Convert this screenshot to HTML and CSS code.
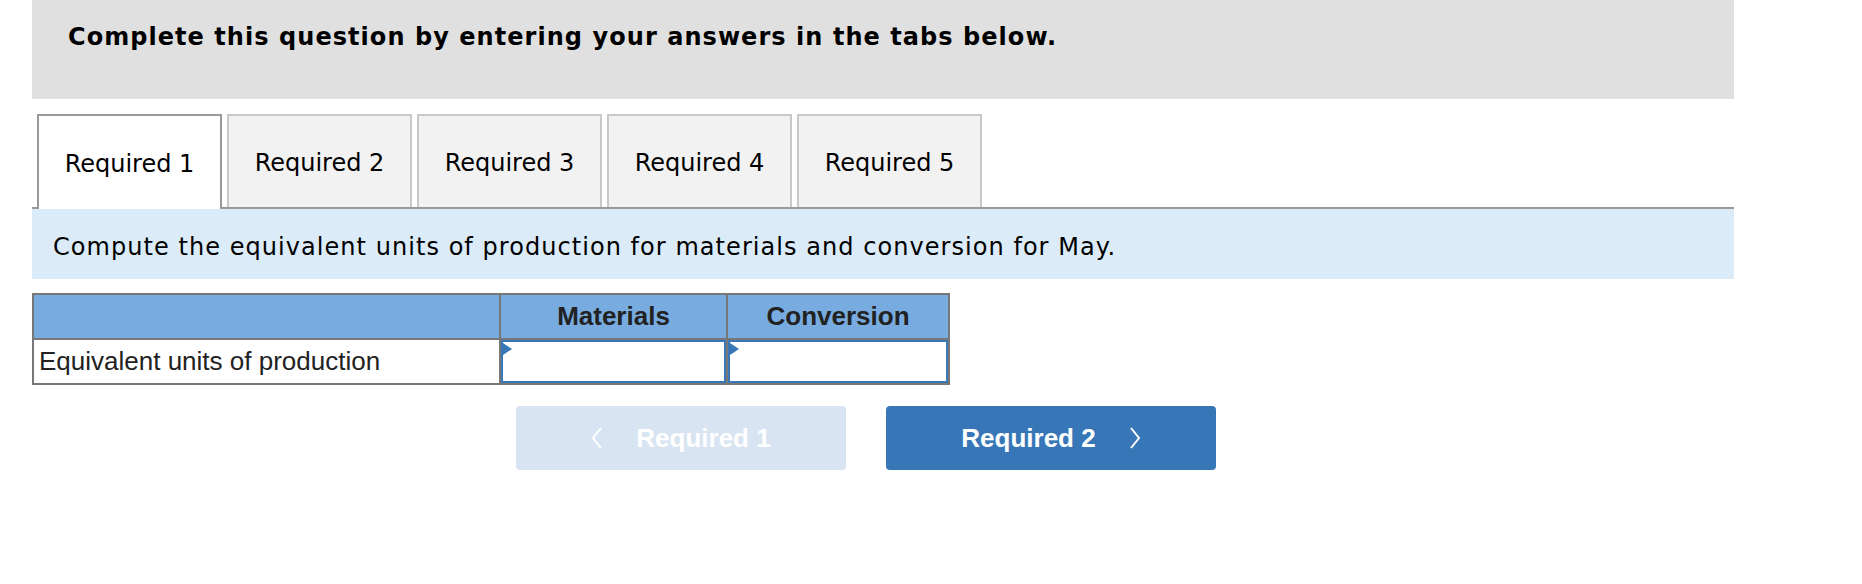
FILE: index.html
```html
<!DOCTYPE html>
<html lang="en">
<head>
    <meta charset="UTF-8">
    <meta name="viewport" content="width=device-width, initial-scale=1.0">
    <title>Required 1</title>
    <link rel="stylesheet" href="styles.css">
</head>
<body>
    <div class="page">
        <div class="prompt">
            <h1>Complete this question by entering your answers in the tabs below.</h1>
        </div>

        <ul class="tabs">
            <li class="tab active">Required 1</li>
            <li class="tab">Required 2</li>
            <li class="tab">Required 3</li>
            <li class="tab">Required 4</li>
            <li class="tab">Required 5</li>
        </ul>

        <div class="instructions">Compute the equivalent units of production for materials and conversion for May.</div>

        <table class="answer">
            <tr>
                <th class="col-label"></th>
                <th class="col-mat">Materials</th>
                <th class="col-conv">Conversion</th>
            </tr>
            <tr>
                <td class="label">Equivalent units of production</td>
                <td class="entry"><div class="input"><span class="flag"></span></div></td>
                <td class="entry last"><div class="input"><span class="flag"></span></div></td>
            </tr>
        </table>

        <div class="nav">
            <button class="btn btn-prev" disabled>
                <svg class="chev" width="12" height="22" viewBox="0 0 12 22"><polyline points="10,1 2,11 10,21"/></svg>
                <span>Required 1</span>
            </button>
            <button class="btn btn-next">
                <span>Required 2</span>
                <svg class="chev" width="12" height="22" viewBox="0 0 12 22"><polyline points="2,1 10,11 2,21"/></svg>
            </button>
        </div>
    </div>
</body>
</html>
```

FILE: styles.css
```css
body {
    margin: 0;
    font-family: "DejaVu Sans", Verdana, sans-serif;
    color: #000;
    background-color: #fff;
}
.page {
    margin-left: 32px;
    width: 1702px;
}

/* bandeau gris du haut */
.prompt {
    background-color: #e0e0e0;
    height: 99px;
    box-sizing: border-box;
    padding: 23px 36px 0;
}
.prompt h1 {
    margin: 0;
    font-size: 24px;
    line-height: 28px;
    font-weight: bold;
    letter-spacing: 1.05px;
}

/* onglets */
.tabs {
    list-style: none;
    margin: 15px 0 0;
    padding: 0 0 0 5px;
    display: flex;
    align-items: flex-end;
    gap: 5px;
    border-bottom: 2px solid #999;
}
.tab {
    width: 185px;
    height: 93px;
    box-sizing: border-box;
    border: 2px solid #c8c8c8;
    border-bottom: none;
    background-color: #f2f2f2;
    display: flex;
    align-items: center;
    justify-content: center;
    font-size: 24px;
    line-height: 28px;
    padding-top: 2px;
}
.tab.active {
    height: 95px;
    margin-bottom: -2px;
    border-color: #999;
    background-color: #fff;
}

.instructions {
    background-color: #dbebf7;
    padding: 24px 21px 18px;
    font-size: 24px;
    line-height: 28px;
    letter-spacing: 1.05px;
}

/* tableau de réponse */
.answer {
    margin-top: 14px;
    width: 916px;
    table-layout: fixed;
    border-spacing: 0;
    border: 2px solid #777;
    font-family: "Liberation Sans", Arial, sans-serif;
    font-size: 26px;
    color: #222;
}
.answer th {
    background-color: #78ace0;
    font-weight: bold;
    line-height: 43px;
    padding: 0;
    border-bottom: 2px solid #777;
    text-align: center;
}
.answer td {
    padding: 0;
    line-height: 43px;
}
.col-label {
    width: 465px;
    border-right: 2px solid #777;
}
.col-mat {
    width: 225px;
    border-right: 2px solid #777;
}
.col-conv {
    width: 220px;
}
.answer .label {
    padding-left: 5px;
    border-right: 2px solid #777;
    white-space: nowrap;
}
.answer .entry {
    border-right: 2px solid #777;
}
.answer .entry.last {
    border-right: none;
}
.input {
    position: relative;
    height: 43px;
    box-sizing: border-box;
    border: 2px solid #3a77b7;
    background-color: #fff;
}
.flag {
    position: absolute;
    left: 0;
    top: 1px;
    width: 0;
    height: 0;
    border-left: 9px solid #3a77b7;
    border-top: 6px solid transparent;
    border-bottom: 6px solid transparent;
}

/* boutons précédent / suivant */
.nav {
    display: flex;
    gap: 40px;
    margin: 21px 0 0 484px;
}
.btn {
    width: 330px;
    height: 64px;
    border: none;
    border-radius: 4px;
    display: flex;
    align-items: center;
    justify-content: center;
    gap: 33px;
    font-family: "Liberation Sans", Arial, sans-serif;
    font-size: 26px;
    font-weight: bold;
    color: #fff;
    cursor: pointer;
    padding: 0;
}
.btn-prev {
    background-color: #d8e4f1;
    cursor: default;
}
.btn-next {
    background-color: #3777b7;
}
.chev polyline {
    fill: none;
    stroke: #fff;
    stroke-width: 2;
}
```
